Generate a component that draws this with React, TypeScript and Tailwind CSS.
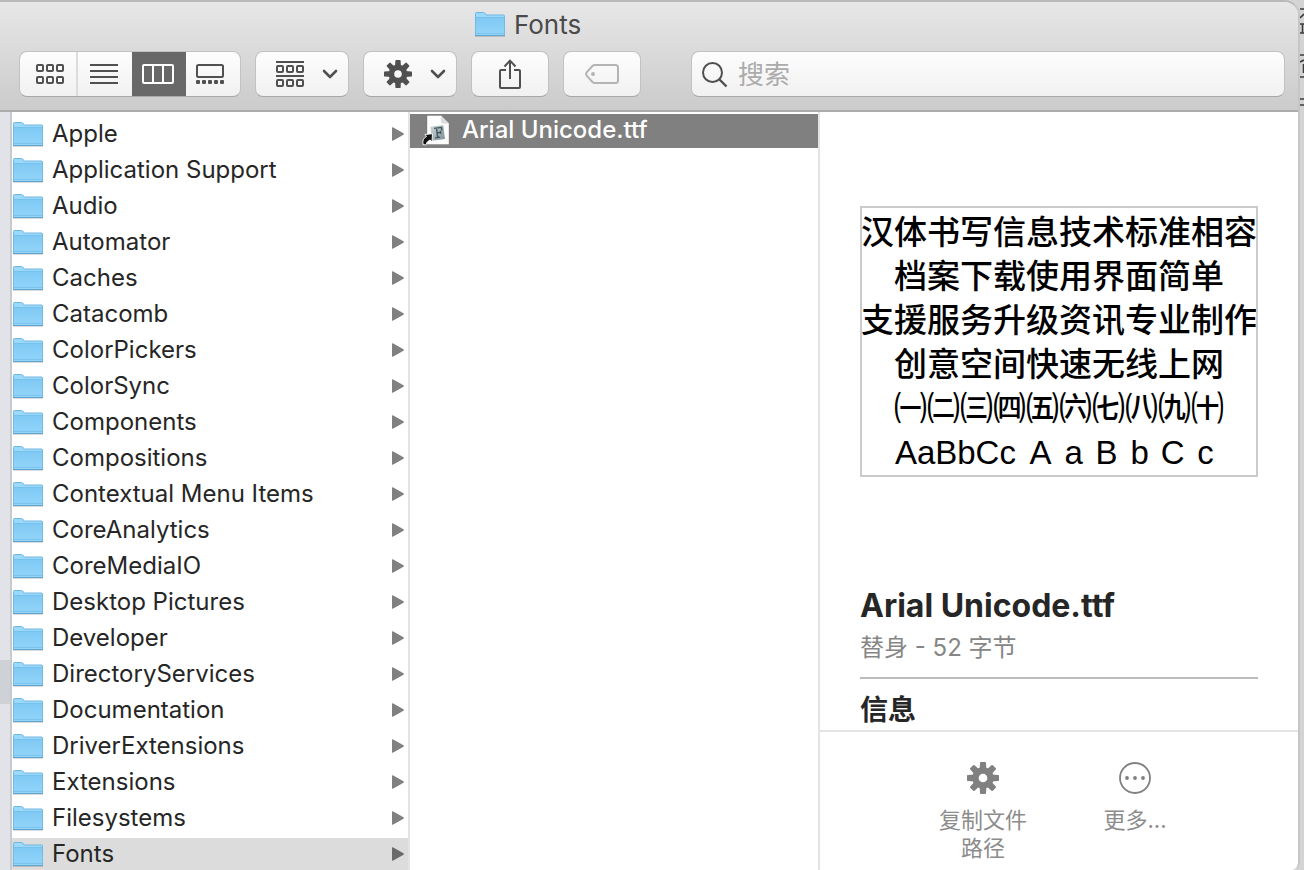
import type { ReactNode } from "react";

const FOLDERS = [
  "Apple",
  "Application Support",
  "Audio",
  "Automator",
  "Caches",
  "Catacomb",
  "ColorPickers",
  "ColorSync",
  "Components",
  "Compositions",
  "Contextual Menu Items",
  "CoreAnalytics",
  "CoreMediaIO",
  "Desktop Pictures",
  "Developer",
  "DirectoryServices",
  "Documentation",
  "DriverExtensions",
  "Extensions",
  "Filesystems",
  "Fonts",
];

const SAMPLE = [
  "汉体书写信息技术标准相容",
  "档案下载使用界面简单",
  "支援服务升级资讯专业制作",
  "创意空间快速无线上网",
  "㈠㈡㈢㈣㈤㈥㈦㈧㈨㈩",
];

const toolBtn =
  "flex h-[46px] items-center justify-center rounded-lg border border-[#c2c2c2] border-b-[#a8a8a8] bg-linear-to-b from-[#fdfdfd] to-[#f1f1f1] text-[#505050]";
const segment = "flex h-full items-center justify-center";

function FolderIcon() {
  return (
    <svg width="30" height="25" viewBox="0 0 30 25" className="shrink-0" aria-hidden="true">
      <defs>
        <linearGradient id="folder" x1="0" y1="0" x2="0" y2="1">
          <stop offset="0" stopColor="#7fc9f3" />
          <stop offset="1" stopColor="#93d5fa" />
        </linearGradient>
      </defs>
      <path d="M0 24.5h30" stroke="#000" strokeOpacity=".14" />
      <path d="M.5 23.5V1.5Q.5.5 1.5.5H8.5Q9.6.5 10.3 1.6L11.2 3H28.6Q29.5 3 29.5 4V23.5Z" fill="#9bd9fb" stroke="#6fb7e0" />
      <path d="M.5 5.5h29v18H.5Z" fill="url(#folder)" stroke="#6cb9e6" strokeOpacity=".7" />
      <path d="M1 21.5h28" stroke="#7cc3ee" />
      <path d="M0 23.5h30" stroke="#5fa5d0" />
    </svg>
  );
}

function Gear({ size }: { size: number }) {
  return (
    <svg width={size} height={size} viewBox="0 0 28 28" fill="currentColor" aria-hidden="true">
      {[0, 45, 90, 135].map((a) => (
        <g key={a} transform={`rotate(${a} 14 14)`}>
          <path d="M11.4.6Q11.5 0 12.1 0H15.9Q16.5 0 16.6.6L17 7H11Z M11 21H17L16.6 27.4Q16.5 28 15.9 28H12.1Q11.5 28 11.4 27.4Z" />
        </g>
      ))}
      <circle cx="14" cy="14" r="6.6" fill="none" stroke="currentColor" strokeWidth="5.6" />
    </svg>
  );
}

function Chevron() {
  return (
    <svg width="16" height="10" viewBox="0 0 16 10" fill="none" stroke="currentColor" strokeWidth="2.6" strokeLinecap="round" strokeLinejoin="round" aria-hidden="true">
      <path d="M2 2l6 6 6-6" />
    </svg>
  );
}

function GridIcon() {
  return (
    <svg width="28" height="20" viewBox="0 0 28 20" fill="none" stroke="currentColor" strokeWidth="2" aria-hidden="true">
      {[1, 11, 21].map((x) => (
        <g key={x}>
          <rect x={x} y="1" width="6" height="6" rx="1" />
          <rect x={x} y="13" width="6" height="6" rx="1" />
        </g>
      ))}
    </svg>
  );
}

function ListIcon() {
  return (
    <svg width="28" height="20" viewBox="0 0 28 20" stroke="currentColor" strokeWidth="2" aria-hidden="true">
      <path d="M0 1h28M0 7h28M0 13h28M0 19h28" />
    </svg>
  );
}

function ColumnsIcon() {
  return (
    <svg width="32" height="20" viewBox="0 0 32 20" fill="none" stroke="currentColor" strokeWidth="2" aria-hidden="true">
      <rect x="1" y="1" width="30" height="18" rx="1" />
      <path d="M11 1v18M21 1v18" />
    </svg>
  );
}

function GalleryIcon() {
  return (
    <svg width="28" height="20" viewBox="0 0 28 20" aria-hidden="true">
      <rect x="1" y="1" width="26" height="12" rx="1.5" fill="none" stroke="currentColor" strokeWidth="2" />
      {[0, 6, 12, 18, 24].map((x) => (
        <rect key={x} x={x} y="16" width="4" height="4" rx="1" fill="currentColor" />
      ))}
    </svg>
  );
}

function GroupIcon() {
  return (
    <svg width="28" height="26" viewBox="0 0 28 26" fill="none" stroke="currentColor" strokeWidth="2" aria-hidden="true">
      <path d="M0 1h28M0 15h28" />
      {[1, 11, 21].map((x) => (
        <g key={x}>
          <rect x={x} y="5" width="6" height="6" rx="1" />
          <rect x={x} y="19" width="6" height="6" rx="1" />
        </g>
      ))}
    </svg>
  );
}

function ShareIcon() {
  return (
    <svg width="22" height="30" viewBox="0 0 22 30" fill="none" stroke="currentColor" strokeWidth="2" aria-hidden="true">
      <path d="M7 11H2Q1 11 1 12V28Q1 29 2 29H20Q21 29 21 28V12Q21 11 20 11H15" />
      <path d="M11 20V2M5.5 7.5L11 1.6l5.5 5.9" />
    </svg>
  );
}

function TagIcon() {
  return (
    <svg width="34" height="20" viewBox="0 0 34 20" fill="none" stroke="#b4b4b4" strokeWidth="2" aria-hidden="true">
      <path d="M10 1H30.5Q33 1 33 3.5V16.5Q33 19 30.5 19H10Q8.5 19 7.4 18L1.7 11.6Q.5 10 1.7 8.4L7.4 2Q8.5 1 10 1Z" />
      <circle cx="8" cy="10" r="2" fill="#b4b4b4" stroke="none" />
    </svg>
  );
}

function SearchIcon() {
  return (
    <svg width="26" height="26" viewBox="0 0 26 26" fill="none" stroke="#4f4f4f" strokeWidth="2" className="shrink-0" aria-hidden="true">
      <circle cx="10.5" cy="10.5" r="9.5" />
      <path d="M17 17l7.5 7.5" strokeWidth="2.4" />
    </svg>
  );
}

function FontFileIcon() {
  return (
    <svg width="28" height="32" viewBox="0 0 28 32" className="shrink-0" aria-hidden="true">
      <defs>
        <linearGradient id="plate" x1="0" y1="0" x2="1" y2="1">
          <stop offset="0" stopColor="#c9d6da" />
          <stop offset="1" stopColor="#7f9096" />
        </linearGradient>
      </defs>
      <path d="M5 1.500H19L27 9.500V30.500H5Z" fill="#fdfdfd" stroke="#5f5f5f" strokeOpacity=".5" strokeWidth=".6" />
      <path d="M19 1.500V8Q19 9.500 20.500 9.500H27Z" fill="#dcdcdc" />
      <g transform="rotate(-7 15 18)">
        <rect x="9" y="12" width="13" height="14" fill="url(#plate)" />
        <path d="M12.500 14h7.500v3M15 14v9.500M12.500 23.500h5M15 18.800h3.500M18.500 17.300v3" fill="none" stroke="#46555a" strokeWidth="1.4" />
      </g>
      <path d="M1 30.500Q0 24.500 4.500 22.500L3 20.500l7.500-.8-.5 8-2-1.700Q4.500 27.500 3.800 31Z" fill="#111" stroke="#fff" strokeWidth=".9" />
    </svg>
  );
}

function Arrow({ dark }: { dark: boolean }) {
  return (
    <svg width="12" height="14" viewBox="0 0 12 14" className="shrink-0" fill={dark ? "#6a6a6a" : "#808080"} aria-hidden="true">
      <path d="M0 .8Q0 0 .8.3L11.5 6.3Q12.2 7 11.5 7.7L.8 13.7Q0 14 0 13.2Z" />
    </svg>
  );
}

function Action({ icon, children }: { icon: ReactNode; children: ReactNode }) {
  return (
    <button type="button" className="flex w-22 flex-col items-center gap-3 text-[22px] leading-7 text-[#8c8c8c]">
      <span className="text-[#808080]">{icon}</span>
      {children}
    </button>
  );
}

export default function App() {
  return (
    <div className="flex h-screen overflow-hidden bg-[#d4d4d4] font-[Inter,'Noto_Sans_CJK_SC',sans-serif] text-[#262626]">
      <div className="flex min-w-0 flex-1 flex-col overflow-hidden rounded-tr-2xl rounded-br-lg border-t-2 border-r-2 border-t-[#b9b9b9] border-r-[#c6c6c6] bg-white">
        <header className="shrink-0 border-b-2 border-[#acacac] bg-linear-to-b from-[#e7e7e7] to-[#cbcbcb] pb-[13px]">
          <div className="flex h-[49px] items-center justify-center gap-[9px] pr-[242px] pb-1">
            <FolderIcon />
            <h1 className="text-[26px] text-[#4a4a4a]">Fonts</h1>
          </div>

          <div className="flex gap-3.5 pr-[13px] pl-[19px]">
            <div className={`${toolBtn} w-[222px] shrink-0 overflow-hidden`} role="group" aria-label="显示">
              <button type="button" aria-label="图标" className={`${segment} w-[58px] border-r-2 border-[#dcdcdc] pl-1`}><GridIcon /></button>
              <button type="button" aria-label="列表" className={`${segment} w-[54px] pr-0.5`}><ListIcon /></button>
              <button type="button" aria-label="分栏" aria-pressed="true" className={`${segment} w-[54px] bg-[#686868] pr-0.5 text-white`}><ColumnsIcon /></button>
              <button type="button" aria-label="画廊" className={`${segment} flex-1 pr-1.5`}><GalleryIcon /></button>
            </div>
            <button type="button" aria-label="群组" className={`${toolBtn} w-[94px] shrink-0 gap-[18px] pl-2.5`}><GroupIcon /><Chevron /></button>
            <button type="button" aria-label="操作" className={`${toolBtn} w-[94px] shrink-0 gap-[18px] pl-2.5`}><Gear size={28} /><Chevron /></button>
            <button type="button" aria-label="共享" className={`${toolBtn} w-[78px] shrink-0`}><ShareIcon /></button>
            <button type="button" aria-label="标签" className={`${toolBtn} w-[78px] shrink-0`}><TagIcon /></button>
            <label className={`${toolBtn} ml-9 min-w-0 flex-1 gap-2.5 px-2.5 pt-0.5`}>
              <SearchIcon />
              <input type="search" placeholder="搜索" aria-label="搜索" className="min-w-0 flex-1 bg-transparent text-[26px] leading-8 outline-none placeholder:text-[#ababab]" />
            </label>
          </div>
        </header>

        <main className="flex min-h-0 flex-1">
          {/* sidebar edge */}
          <div className="w-3 shrink-0 border-r-2 border-[#c9cacf] bg-[#e1e3e8] pt-[548px]">
            <div className="h-11 bg-[#ced1d6]" />
          </div>

          <ul className="flex w-[398px] shrink-0 flex-col gap-0.5 overflow-hidden border-r-2 border-[#e4e4e4] pt-1.5">
            {FOLDERS.map((name) => (
              <li key={name} className={`shrink-0 ${name === "Fonts" ? "bg-[#dcdcdc]" : ""}`}>
                <button type="button" className="flex h-[34px] w-full items-center gap-[9px] pr-1 pb-0.5 pl-px text-left text-2xl">
                  <FolderIcon />
                  <span className="flex-1 truncate">{name}</span>
                  <Arrow dark={name === "Fonts"} />
                </button>
              </li>
            ))}
          </ul>

          <ul className="w-[410px] shrink-0 border-r-2 border-[#e4e4e4] pt-0.5">
            <li>
              <button type="button" className="flex h-[34px] w-full items-center gap-3 bg-[#808080] pb-0.5 pl-3 text-left text-2xl font-medium text-white">
                <FontFileIcon />
                Arial Unicode.ttf
              </button>
            </li>
          </ul>

          <section className="flex min-w-0 flex-1 flex-col">
            <div className="min-h-0 flex-1 overflow-hidden px-10 pt-[94px]">
              <div className="flex flex-col items-center overflow-hidden border-2 border-[#cbcbcb] pt-[3px] font-['Liberation_Sans','Noto_Sans_CJK_SC',sans-serif] text-[33px] leading-11 font-medium whitespace-nowrap text-black">
                {SAMPLE.map((line) => (
                  <p key={line}>{line}</p>
                ))}
                <p>
                  AaBbCc{" "}
                  {["A", "a", "B", "b", "C", "c"].map((c) => (
                    <span key={c} className="inline-block w-[33px] pr-0.5 text-center">{c}</span>
                  ))}
                </p>
              </div>
              <h2 className="mt-[109px] text-[32px] leading-10 font-bold">Arial Unicode.ttf</h2>
              <p className="mt-1 border-b-2 border-[#bcbcbc] pb-[11px] text-2xl leading-9 text-[#868686]">替身 - 52 字节</p>
              <h3 className="mt-[11px] text-[28px] leading-10 font-bold">信息</h3>
            </div>
            <div className="flex h-35 shrink-0 items-start justify-center gap-16 border-t-2 border-[#e4e4e4] pt-[30px]">
              <Action icon={<Gear size={32} />}>复制文件路径</Action>
              <Action
                icon={
                  <svg width="32" height="32" viewBox="0 0 32 32" fill="currentColor" aria-hidden="true">
                    <circle cx="16" cy="16" r="15" fill="none" stroke="currentColor" strokeWidth="1.8" />
                    <circle cx="8" cy="16" r="1.9" />
                    <circle cx="16" cy="16" r="1.9" />
                    <circle cx="24" cy="16" r="1.9" />
                  </svg>
                }
              >
                更多...
              </Action>
            </div>
          </section>
        </main>
      </div>

      {/* document behind the window */}
      <div className="w-1 shrink-0">
        <svg width="4" height="110" viewBox="0 0 4 110" fill="none" stroke="#3c3c3c" strokeWidth="1.6" aria-hidden="true">
          <path d="M0 9h4M0 18l4-4M0 24h4M0 33h4M2.5 24v9M0 55h4M0 62l4-2M3.5 64v9M0 77h4M0 99h4M0 105h4" />
        </svg>
      </div>
    </div>
  );
}
